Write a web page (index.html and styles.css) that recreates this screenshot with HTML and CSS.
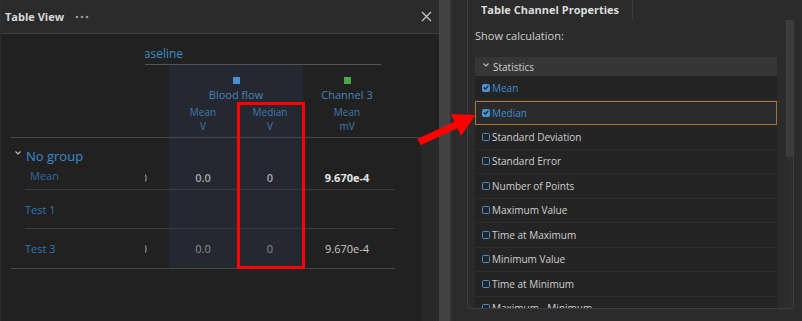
FILE: index.html
```html
<!DOCTYPE html>
<html lang="en">
<head>
  <meta charset="UTF-8">
  <meta name="viewport" content="width=device-width, initial-scale=1.0">
  <title>Table View</title>
  <link rel="stylesheet" href="styles.css">
</head>
<body>
  <div class="app">
    <!-- Table view panel -->
    <section class="view">
      <header class="view-head">
        <span class="view-title">Table View</span>
        <svg class="more" width="14" height="4" viewBox="0 0 14 4">
          <circle cx="2" cy="2" r="1.3" />
          <circle cx="7" cy="2" r="1.3" />
          <circle cx="12" cy="2" r="1.3" />
        </svg>
        <svg class="close" width="11" height="11" viewBox="0 0 11 11">
          <path d="M1 1 10 10M10 1 1 10" />
        </svg>
      </header>

      <div class="view-body">
        <div class="thead">
          <div class="trow grp-row">
            <div class="grp-name"><span>Baseline</span></div>
          </div>
          <div class="trow ch-row">
            <div></div>
            <div></div>
            <div class="ch shaded wide">
              <span class="sq sq-blue"></span>
              <div class="ch-name">Blood flow</div>
              <div class="calcs">
                <div>Mean<br>V</div>
                <div>Median<br>V</div>
              </div>
            </div>
            <div class="ch ch-last">
              <span class="sq sq-green"></span>
              <div class="ch-name">Channel 3</div>
              <div class="calcs one">
                <div>Mean<br>mV</div>
              </div>
            </div>
          </div>
        </div>

        <div class="tbody-wrap">
          <div class="tbody">
            <div class="group">
              <div class="trow grp-title">
                <div class="grp-label">
                  <svg class="chev" width="6" height="4" viewBox="0 0 6 4"><path d="M0.5 0.5 3 3 5.5 0.5" /></svg>
                  No group
                </div>
                <div></div>
                <div class="shaded"></div>
                <div class="shaded"></div>
                <div></div>
              </div>

              <div class="trow sub row-mean">
                <div class="lbl lbl-mean">Mean</div>
                <div class="cut-cell"><span class="cut">0</span></div>
                <div class="val shaded strong">0.0</div>
                <div class="val shaded strong">0</div>
                <div class="val last bright">9.670e-4</div>
              </div>

              <div class="trow sub row-test1">
                <div class="lbl">Test 1</div>
                <div></div>
                <div class="shaded"></div>
                <div class="shaded"></div>
                <div></div>
              </div>

              <div class="trow sub row-test3">
                <div class="lbl">Test 3</div>
                <div class="cut-cell"><span class="cut">0</span></div>
                <div class="val shaded dim">0.0</div>
                <div class="val shaded dim">0</div>
                <div class="val last">9.670e-4</div>
              </div>
            </div>
          </div>
          <div class="vscroll"></div>
        </div>
      </div>
    </section>

    <div class="splitter"></div>

    <!-- Properties panel -->
    <section class="props">
      <div class="tabs">
        <div class="tab">Table Channel Properties</div>
      </div>
      <div class="props-box">
        <div class="props-content">
          <div class="show-label">Show calculation:</div>
          <div class="calc-list">
            <div class="calc-head">
              <svg class="chev" width="6" height="4" viewBox="0 0 6 4"><path d="M0.5 0.5 3 3 5.5 0.5" /></svg>
              Statistics
            </div>
            <div class="calc checked"><span class="box"><svg width="6" height="5" viewBox="0 0 6 5"><path d="M0.6 2.4 2.4 4 5.4 0.8" /></svg></span>Mean</div>
            <div class="calc checked focused"><span class="box"><svg width="6" height="5" viewBox="0 0 6 5"><path d="M0.6 2.4 2.4 4 5.4 0.8" /></svg></span>Median</div>
            <div class="calc"><span class="box"></span>Standard Deviation</div>
            <div class="calc"><span class="box"></span>Standard Error</div>
            <div class="calc"><span class="box"></span>Number of Points</div>
            <div class="calc"><span class="box"></span>Maximum Value</div>
            <div class="calc"><span class="box"></span>Time at Maximum</div>
            <div class="calc"><span class="box"></span>Minimum Value</div>
            <div class="calc"><span class="box"></span>Time at Minimum</div>
            <div class="calc"><span class="box"></span>Maximum - Minimum</div>
          </div>
        </div>
        <div class="scrollbar"><div class="thumb"></div></div>
      </div>
    </section>

    <!-- Annotations -->
    <div class="red-box"></div>
    <svg class="arrow" width="70" height="45" viewBox="410 105 70 45">
      <polygon points="417.5,138.8 454.5,121.8 451,114 475.5,115 461,136 457.5,128.2 420.5,145.2" />
    </svg>
  </div>
</body>
</html>
```

FILE: styles.css
```css
/* Base */
:root {
  --bg-panel: #2b2b2b;
  --bg-table: #212121;
  --shade: #252830;
  --blue: #3f89c6;
  --blue-dim: #3c7ab0;
  --text: #cfcfcf;
  --cols: 134px 24px 68px 66px 92px;
}

* {
  margin: 0;
  padding: 0;
  box-sizing: border-box;
}

body {
  font-family: "Open Sans", "Noto Sans", sans-serif;
  background-color: var(--bg-panel);
  color: var(--text);
  overflow: hidden;
}

.app {
  position: relative;
  display: flex;
  width: 802px;
  height: 321px;
}

/* Table view */
.view {
  width: 439px;
  display: flex;
  flex-direction: column;
  background-color: var(--bg-table);
  border-left: 1px solid #2f2f2f;
}

.view-head {
  height: 34px;
  display: flex;
  align-items: center;
  padding-left: 4px;
  background-color: #2b2b2b;
  border-bottom: 1px solid #3e3e3e;
}

.view-title {
  font-size: 11px;
  font-weight: 700;
  color: #d8d8d8;
}

.more {
  margin-left: 11px;
  margin-top: 1px;
  fill: #9a9a9a;
}

.close {
  margin-left: auto;
  margin-right: 7px;
  stroke: #c4c4c4;
  stroke-width: 1.3;
}

.view-body {
  flex: 1;
  display: flex;
  flex-direction: column;
  padding-left: 10px;
}

.trow {
  display: grid;
  grid-template-columns: var(--cols);
}

.thead {
  width: 410px;
  border-bottom: 1px solid #474747;
}

.thead .trow {
  grid-template-columns: var(--cols) 26px;
}

.grp-name {
  grid-column: 2 / span 4;
  margin-right: 14px;
  height: 31px;
  padding-top: 12px;
  line-height: 16px;
  font-size: 12px;
  color: var(--blue);
  white-space: nowrap;
  overflow: hidden;
  border-bottom: 1px solid #555;
}

.grp-name span {
  margin-left: -9px;
}

.shaded {
  background-color: var(--shade);
}

.ch {
  padding: 12px 0 4px;
  text-align: center;
  color: var(--blue-dim);
}

.wide {
  grid-column: 3 / span 2;
}

.ch-last {
  padding-right: 4px;
}

.sq {
  display: block;
  width: 7px;
  height: 7px;
  margin: 0 auto;
}

.sq-blue {
  background-color: #4a90d0;
}

.sq-green {
  background-color: #4aa84a;
}

.ch-name {
  margin-top: 4px;
  font-size: 11px;
  line-height: 14px;
  color: #4783b8;
}

.calcs {
  display: grid;
  grid-template-columns: 68px 66px;
  margin-top: 3px;
  font-size: 10px;
  line-height: 14px;
}

.calcs.one {
  grid-template-columns: 1fr;
}

/* Table body */
.tbody-wrap {
  flex: 1;
  display: flex;
}

.tbody {
  flex: 1;
}

.vscroll {
  width: 18px;
  background-color: #282828;
}

.group {
  width: 384px;
  border-bottom: 1px solid #464646;
}

.grp-title {
  height: 27px;
}

.grp-label {
  display: flex;
  align-items: center;
  padding: 9px 0 0 4px;
  height: 27px;
  font-size: 13px;
  line-height: 18px;
  color: #3a8bd0;
  white-space: nowrap;
}

.grp-label .chev {
  margin-right: 5px;
  margin-top: -6px;
}

.chev {
  fill: none;
  stroke: #b8b8b8;
  stroke-width: 1.2;
}

.sub {
  margin-left: 14px;
  grid-template-columns: 120px 24px 68px 66px 92px;
  border-bottom: 1px solid #3b3b3b;
}

.row-mean {
  height: 25px;
}

.row-test1 {
  height: 39px;
}

.row-test3 {
  height: 39px;
  border-bottom: none;
}

.lbl {
  display: flex;
  align-items: center;
  font-size: 11px;
  color: #2f76b2;
}

.lbl-mean {
  padding-left: 5px;
  padding-bottom: 3px;
  color: #2c6aa3;
}

.cut-cell {
  display: flex;
  align-items: center;
}

.cut {
  display: inline-flex;
  justify-content: flex-end;
  width: 2px;
  overflow: hidden;
  font-size: 11px;
  color: #aaa;
}

.val {
  display: flex;
  align-items: center;
  justify-content: center;
  font-size: 11px;
  color: #a8a8a8;
}

.val.last {
  padding-right: 4px;
  color: #c8c8c8;
}

.strong {
  font-weight: 600;
}

.bright {
  font-weight: 700;
  color: #e4e4e4 !important;
}

.dim {
  color: #8e8e8e;
}

/* Splitter */
.splitter {
  width: 13px;
  background-color: #434343;
  border-right: 2px solid #323232;
}

/* Properties panel */
.props {
  flex: 1;
  display: flex;
  flex-direction: column;
  padding: 0 8px 12px 15px;
}

.tabs {
  display: flex;
  height: 20px;
}

.tab {
  width: 166px;
  padding-left: 13px;
  line-height: 20px;
  font-size: 11px;
  font-weight: 700;
  color: #dcdcdc;
  border-left: 1px solid #3d3d3d;
  border-right: 1px solid #3d3d3d;
}

.props-box {
  flex: 1;
  display: flex;
  min-height: 0;
  margin-top: -1px;
  border: 1px solid #3d3d3d;
  border-top-color: transparent;
  border-radius: 0 3px 3px 3px;
  position: relative;
  overflow: hidden;
}

.props-box::before {
  content: "";
  position: absolute;
  top: -1px;
  left: 165px;
  right: 0;
  border-top: 1px solid #3d3d3d;
}

.props-content {
  flex: 1;
  padding: 0 9px 0 7px;
  overflow: hidden;
}

.show-label {
  padding-top: 8px;
  font-size: 11px;
  line-height: 16px;
  color: #cfcfcf;
}

.calc-list {
  margin-top: 13px;
}

.calc-head {
  display: flex;
  align-items: center;
  height: 19px;
  padding-left: 8px;
  background-color: #363636;
  font-size: 10px;
  color: #cfcfcf;
}

.calc-head .chev {
  margin-right: 4px;
  margin-top: -4px;
}

.calc {
  display: flex;
  align-items: center;
  height: 24.5px;
  padding-left: 7px;
  background-color: #242424;
  border-bottom: 1px solid #2e2e2e;
  font-size: 10px;
  color: #cfcfcf;
}

.calc.checked {
  color: #3f8cd0;
}

.calc.focused {
  border: 1px solid #a8733b;
  padding-left: 6px;
  background-color: #2a2a2a;
}

.box {
  display: flex;
  align-items: center;
  justify-content: center;
  width: 8px;
  height: 8px;
  margin-right: 2px;
  border: 1px solid #4a8cc6;
  border-radius: 1.5px;
}

.checked .box {
  background-color: #4a92d2;
  border-color: #4a92d2;
}

.box svg {
  fill: none;
  stroke: #1d2a38;
  stroke-width: 1.3;
}

.scrollbar {
  width: 7px;
  background-color: #2d2d2d;
}

.thumb {
  height: 137px;
  background-color: #3b3b3b;
  border-left: 1px solid #444;
}

/* Annotations */
.red-box {
  position: absolute;
  left: 237px;
  top: 102px;
  width: 68px;
  height: 167px;
  border: 3px solid #ff0000;
}

.arrow {
  position: absolute;
  left: 410px;
  top: 105px;
  fill: #ff0000;
}
```
